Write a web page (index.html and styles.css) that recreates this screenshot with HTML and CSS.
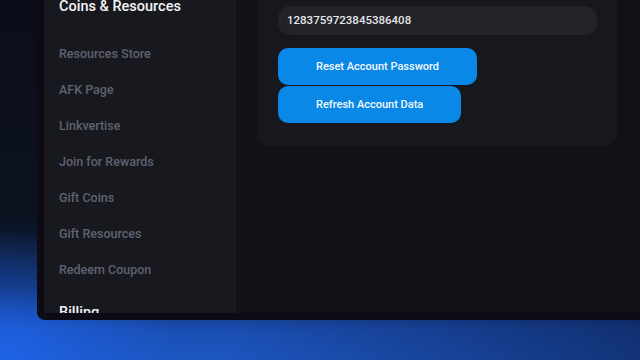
FILE: index.html
```html
<!DOCTYPE html>
<html lang="en">
<head>
    <meta charset="utf-8" />
    <title>Account</title>
    <meta name="viewport" content="width=device-width, initial-scale=1" />
<link rel="stylesheet" href="styles.css">
</head>
<body>
<div class="stage">
  <div class="window">
    <nav class="sidebar">
      <h3 class="group">Coins &amp; Resources</h3>
      <ul class="links">
        <li>Resources Store</li>
        <li>AFK Page</li>
        <li>Linkvertise</li>
        <li>Join for Rewards</li>
        <li>Gift Coins</li>
        <li>Gift Resources</li>
        <li>Redeem Coupon</li>
      </ul>
      <h3 class="group billing">Billing</h3>
    </nav>
    <main class="content">
      <section class="card">
        <div class="field">1283759723845386408</div>
        <div class="actions">
          <button class="btn">Reset Account Password</button>
          <button class="btn">Refresh Account Data</button>
        </div>
      </section>
    </main>
  </div>
</div>
</body>
</html>
```

FILE: styles.css
```css
html, body {
    margin: 0;
    height: 100%;
    overflow: hidden;
}

body {
    font-family: "Roboto", "Noto Sans", sans-serif;
    background:
        radial-gradient(ellipse 180px 130px at 0 360px, #1e62e6 0%, rgba(30,98,230,0.5) 45%, rgba(30,98,230,0) 100%),
        linear-gradient(to right, rgba(0,0,0,0) 35%, rgba(8,18,50,0.5) 100%),
        linear-gradient(to bottom, #0a0e18 0%, #0c1220 60%, #0f2656 80%, #1a4fb4 92%, #1d56c0 100%);
}

.stage {
    padding-left: 37px;
}

.window {
    display: flex;
    height: 313px;
    border: 7px solid #0e0b15;
    border-top: 0;
    border-right: 0;
    border-radius: 0 0 0 8px;
    overflow: hidden;
}

.sidebar {
    width: 177px;
    padding-left: 15px;
    background-color: #18191e;
    overflow: hidden;
}

.group {
    margin: -2px 0 0;
    font-size: 14.5px;
    font-weight: 500;
    line-height: 18px;
    color: #f2f3f5;
}

.links {
    list-style: none;
    margin: 0;
    padding: 20px 0 0;
}

.links li {
    height: 36px;
    line-height: 36px;
    font-size: 12.5px;
    font-weight: 500;
    color: #5f6271;
}

.billing {
    margin-top: 16px;
}

.content {
    flex: 1;
    padding-left: 21px;
    background-color: #111217;
}

.card {
    width: 319px;
    padding: 6px 20px 23px 21px;
    background-color: #17181d;
    border-radius: 0 0 12px 12px;
}

.field {
    height: 29px;
    line-height: 29px;
    padding-left: 9px;
    border-radius: 12px;
    background-color: #222328;
    color: #e4e5e8;
    font-size: 11.5px;
    font-weight: 500;
}

.actions {
    display: flex;
    flex-direction: column;
    align-items: flex-start;
    gap: 1px;
    margin-top: 13px;
}

.btn {
    height: 37px;
    padding: 0 38px;
    border: 0;
    border-radius: 10px;
    background-color: #0a88e8;
    color: #f4f8fc;
    font-family: inherit;
    font-size: 11px;
    font-weight: 500;
}
```
